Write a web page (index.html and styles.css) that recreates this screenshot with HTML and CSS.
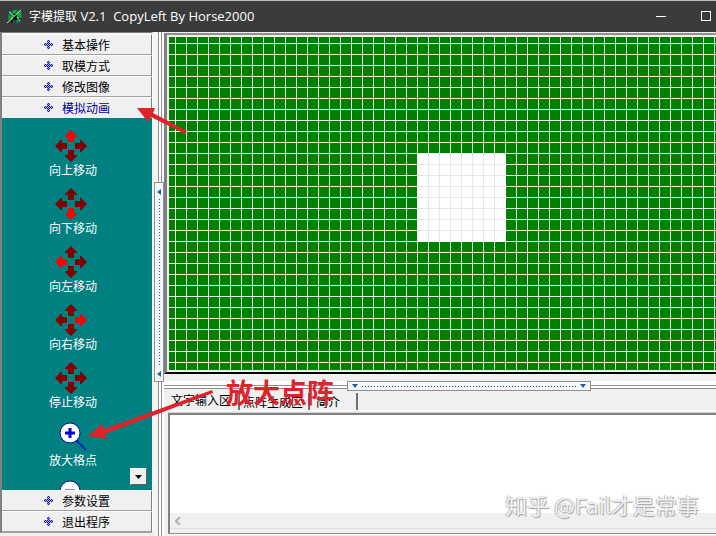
FILE: index.html
```html
<!DOCTYPE html>
<html lang="zh-CN">
<head>
  <meta charset="UTF-8">
  <meta name="viewport" content="width=device-width, initial-scale=1.0">
  <title>字模提取 V2.1</title>
  <link rel="stylesheet" href="styles.css">
</head>
<body>
  <!-- Shared shapes -->
  <svg class="defs" width="0" height="0" aria-hidden="true">
    <defs>
      <path id="arm" d="M16 0 L22 6 V7 H19 V12 H13 V7 H10 V6 Z"/>
      <g id="diamond" fill="#1c1ca8">
        <path d="M4 0h1v1h-1zM3 1h1v1h-1zM5 1h1v1h-1zM4 2h1v1h-1zM1 3h1v1h-1zM3 3h1v1h-1zM5 3h1v1h-1zM7 3h1v1h-1zM0 4h1v1h-1zM2 4h1v1h-1zM4 4h1v1h-1zM6 4h1v1h-1zM8 4h1v1h-1zM1 5h1v1h-1zM3 5h1v1h-1zM5 5h1v1h-1zM7 5h1v1h-1zM4 6h1v1h-1zM3 7h1v1h-1zM5 7h1v1h-1zM4 8h1v1h-1z"/>
        <path d="M3 0h3v3h3v3H6v3H3V6H0V3h3z" opacity=".3"/>
      </g>
      <g id="zoom">
        <path d="M21 20 L31 30" stroke="#0020c0" stroke-width="2"/>
        <circle cx="15" cy="13" r="10" fill="#fff" stroke="#10108c"/>
        <path d="M10 13h10M15 8v10" stroke="#0000d8" stroke-width="3"/>
      </g>
    </defs>
  </svg>

  <header class="title-bar">
    <svg class="app-icon" width="16" height="16" viewBox="0 0 16 16">
      <path d="M2 2h5v2h2V1h4v2h2v6h-2v5H9v-3H7v3H4v-3H1V5h1z" fill="#08766a"/>
      <path d="M6 1h3v3H6zM10 3h4v6h-4zM2 7h4v3H2z" fill="#10a040"/>
      <path d="M6 5h4v6H6zM4 11h2v3H4zM11 9h2v2h-2z" fill="#061a14"/>
      <path d="M0 14L14 1M2 3l5 4M10 8l3 4" stroke="#e6e060" fill="none"/>
    </svg>
    <h1 class="title-text"><span>字模提取</span> V2.1&nbsp; CopyLeft By Horse2000</h1>
    <button class="win-button" aria-label="最小化"><svg width="11" height="11"><path d="M0 5.500h10" stroke="#fff"/></svg></button>
    <button class="win-button" aria-label="最大化"><svg width="11" height="11"><rect x=".5" y=".5" width="9" height="9" fill="none" stroke="#fff"/></svg></button>
  </header>

  <div class="workspace">
    <nav class="sidebar">
      <button class="group"><svg width="9" height="9"><use href="#diamond"/></svg>基本操作</button>
      <button class="group"><svg width="9" height="9"><use href="#diamond"/></svg>取模方式</button>
      <button class="group"><svg width="9" height="9"><use href="#diamond"/></svg>修改图像</button>
      <button class="group active"><svg width="9" height="9"><use href="#diamond"/></svg>模拟动画</button>

      <div class="tool-panel">
        <div class="tools">
          <button class="tool">
            <svg width="32" height="32" viewBox="0 0 32 32"><use href="#arm" class="on"/><use href="#arm" transform="rotate(90 16 16)"/><use href="#arm" transform="rotate(180 16 16)"/><use href="#arm" transform="rotate(270 16 16)"/></svg>
            <span>向上移动</span>
          </button>
          <button class="tool">
            <svg width="32" height="32" viewBox="0 0 32 32"><use href="#arm"/><use href="#arm" transform="rotate(90 16 16)"/><use href="#arm" class="on" transform="rotate(180 16 16)"/><use href="#arm" transform="rotate(270 16 16)"/></svg>
            <span>向下移动</span>
          </button>
          <button class="tool">
            <svg width="32" height="32" viewBox="0 0 32 32"><use href="#arm"/><use href="#arm" transform="rotate(90 16 16)"/><use href="#arm" transform="rotate(180 16 16)"/><use href="#arm" class="on" transform="rotate(270 16 16)"/></svg>
            <span>向左移动</span>
          </button>
          <button class="tool">
            <svg width="32" height="32" viewBox="0 0 32 32"><use href="#arm"/><use href="#arm" class="on" transform="rotate(90 16 16)"/><use href="#arm" transform="rotate(180 16 16)"/><use href="#arm" transform="rotate(270 16 16)"/></svg>
            <span>向右移动</span>
          </button>
          <button class="tool">
            <svg width="32" height="32" viewBox="0 0 32 32"><use href="#arm"/><use href="#arm" transform="rotate(90 16 16)"/><use href="#arm" transform="rotate(180 16 16)"/><use href="#arm" transform="rotate(270 16 16)"/></svg>
            <span>停止移动</span>
          </button>
          <button class="tool">
            <svg width="32" height="32" viewBox="0 0 32 32"><use href="#zoom"/></svg>
            <span>放大格点</span>
          </button>
          <button class="tool" aria-label="缩小格点">
            <svg width="32" height="32" viewBox="0 0 32 32"><circle cx="15" cy="13" r="10" fill="#fff" stroke="#10108c"/><path d="M10 13h10" stroke="#0000d8" stroke-width="3"/></svg>
          </button>
        </div>
        <button class="scroll-down" aria-label="向下滚动"><svg width="7" height="4"><path d="M0 0h7L3.500 4z"/></svg></button>
      </div>

      <button class="group"><svg width="9" height="9"><use href="#diamond"/></svg>参数设置</button>
      <button class="group"><svg width="9" height="9"><use href="#diamond"/></svg>退出程序</button>
    </nav>

    <div class="v-splitter">
      <div class="v-thumb">
        <svg width="4" height="6"><path d="M4 0v6L0 3z" fill="#2060a0"/></svg>
        <i></i>
        <svg width="4" height="6"><path d="M4 0v6L0 3z" fill="#2060a0"/></svg>
      </div>
    </div>

    <main class="main">
      <div class="canvas-frame">
        <div class="dot-canvas">
          <div class="selection"></div>
        </div>
      </div>

      <div class="h-splitter">
        <div class="h-thumb">
          <svg width="6" height="4"><path d="M0 0h6L3 4z" fill="#2060a0"/></svg>
          <i></i>
          <svg width="6" height="4"><path d="M0 0h6L3 4z" fill="#2060a0"/></svg>
        </div>
      </div>

      <div class="tabs" role="tablist">
        <button class="tab selected" role="tab" aria-selected="true">文字输入区</button>
        <button class="tab" role="tab">点阵生成区</button>
        <button class="tab last" role="tab">简介</button>
      </div>

      <div class="editor">
        <textarea class="editor-text" aria-label="文字输入区"></textarea>
        <div class="h-scroll">
          <svg width="6" height="8"><path d="M5 0L1 4l4 4" fill="none" stroke="#b4b4b4" stroke-width="2"/></svg>
        </div>
      </div>
    </main>
  </div>

  <!-- Notes drawn over the window -->
  <div class="note-text">放大点阵</div>
  <svg class="note-arrows" width="230" height="450" aria-hidden="true">
    <g fill="#e0232b">
      <path d="M137 108 L155 108 L153 113 L187 131 L185 134 L151 117 L148 122 Z"/>
      <path d="M88 436 L102 424 L104 429 L212 390 L213 393 L105 434 L107 439 Z"/>
    </g>
  </svg>
  <div class="watermark">知乎 @Fail才是常事</div>
</body>
</html>
```
FILE: styles.css
```css
/* General Reset */
* {
  margin: 0;
  padding: 0;
  box-sizing: border-box;
}

body {
  position: relative;
  display: flex;
  flex-direction: column;
  height: 100vh;
  overflow: hidden;
  background: #f0f0f0;
  color: #000;
  font-family: "Noto Sans CJK SC", sans-serif;
  font-size: 12px;
  line-height: 16px;
}

button {
  border: none;
  background: none;
  color: inherit;
  font: inherit;
  white-space: nowrap;
}

svg {
  display: block;
  flex: none;
}

.defs {
  position: absolute;
}

/* Title bar */
.title-bar {
  flex: none;
  display: flex;
  align-items: center;
  height: 32px;
  padding-left: 7px;
  border-top: 1px solid #b8c0bc;
  background: #3b3b3b;
  color: #fff;
  overflow: hidden;
}

.title-text {
  flex: 1;
  margin-left: 6px;
  font-family: "Open Sans", "Noto Sans CJK SC", sans-serif;
  font-size: 13px;
  font-weight: normal;
}

.title-text span {
  font-size: 12px;
}

.win-button {
  display: flex;
  justify-content: center;
  align-items: center;
  width: 45px;
  height: 31px;
}

.win-button:last-child {
  width: 44px;
  margin-right: -12px;
}

.workspace {
  flex: 1;
  display: flex;
  min-height: 0;
}

/* Sidebar */
.sidebar {
  flex: none;
  display: flex;
  flex-direction: column;
  width: 153px;
  margin-bottom: 3px;
  border-left: 2px solid #808080;
  border-right: 1px solid #fff;
  border-top: 1px solid #808080;
  border-bottom: 1px solid #a0a0a0;
}

.group {
  flex: none;
  display: flex;
  justify-content: center;
  align-items: center;
  gap: 9px;
  height: 21px;
  padding-left: 1px;
  border-top: 1px solid #fff;
  border-right: 1px solid #808080;
  border-bottom: 1px solid #a0a0a0;
  background: #f0f0f0;
}

.group:first-child {
  margin-top: 1px;
}

.group.active {
  border-bottom-color: #f0f0f0;
  color: #0000a0;
}

.tool-panel {
  position: relative;
  flex: 1 1 0px;
  min-height: 0;
  background: #008080;
  overflow: hidden;
}

.tools {
  display: flex;
  flex-direction: column;
  align-items: center;
  gap: 10px;
  padding: 12px 8px 0 0;
}

.tool {
  flex: none;
  display: flex;
  flex-direction: column;
  align-items: center;
  justify-content: flex-start;
  width: 52px;
  height: 48px;
  color: #fff;
}

.tool svg {
  margin-right: 4px;
  fill: #800000;
}

.tool .on {
  fill: #ff0000;
}

.scroll-down {
  position: absolute;
  right: 5px;
  bottom: 5px;
  display: flex;
  justify-content: center;
  align-items: center;
  width: 17px;
  height: 17px;
  border: 1px solid #fff;
  border-right-color: #606060;
  border-bottom-color: #606060;
  background: #f0f0f0;
}

/* Splitters */
.v-splitter {
  flex: none;
  display: flex;
  justify-content: flex-end;
  align-items: flex-start;
  width: 11px;
  padding-top: 150px;
  background: linear-gradient(to right, #f4f4f4 5px, #909090 5px, #909090 6px, #fff 6px, #fff 8px, #909090 8px, #909090 9px, #fff 9px);
}

.v-thumb {
  display: flex;
  flex-direction: column;
  align-items: center;
  gap: 4px;
  width: 10px;
  height: 200px;
  padding: 6px 0 4px;
  border: 1px solid #909090;
  background: #f4f8fb;
}

.v-thumb i {
  flex: 1;
  width: 1px;
  background: repeating-linear-gradient(#3050d0 0 1px, transparent 1px 3px);
}

.h-splitter {
  flex: none;
  height: 11px;
  margin-top: 7px;
  padding-left: 183px;
  background: linear-gradient(#fff 4px, #909090 4px, #909090 5px, #fff 5px, #fff 7px, #909090 7px, #909090 8px, #f0f0f0 8px);
}

.h-thumb {
  display: flex;
  align-items: center;
  gap: 4px;
  width: 244px;
  height: 10px;
  padding: 0 4px;
  border: 1px solid #909090;
  background: #f4f8fb;
}

.h-thumb i {
  flex: 1;
  height: 1px;
  background: repeating-linear-gradient(to right, #2060a0 0 1px, transparent 1px 3px);
}

/* Dot canvas */
.main {
  flex: 1;
  display: flex;
  flex-direction: column;
  min-width: 0;
}

.canvas-frame {
  flex: 1;
  display: flex;
  min-height: 0;
  margin-top: 1px;
  padding: 2px 0 2px 2px;
  border-top: 2px solid #909090;
  border-left: 3px solid #808080;
  border-bottom: 2px solid #000;
  background: #f0f0f0;
}

.dot-canvas {
  flex: 1;
  padding: 116px 0 0 248px;
  background-color: #008000;
  background-image:
    linear-gradient(to right, #e8f4e8 1px, transparent 1px),
    linear-gradient(#e8f4e8 1px, transparent 1px);
  background-size: 11px 11px;
  background-position: 6px 6px;
}

.selection {
  width: 89px;
  height: 89px;
  border: 1px solid #fff;
  background-color: #fff;
  background-image:
    linear-gradient(to right, #e8e8e8 1px, transparent 1px),
    linear-gradient(#e8e8e8 1px, transparent 1px);
  background-size: 11px 11px;
  background-position: 10px 10px;
}

/* Tabs and editor */
.tabs {
  flex: none;
  display: flex;
  align-items: flex-end;
  height: 19px;
  padding-left: 4px;
  border-bottom: 1px solid #fff;
}

.tab {
  height: 17px;
  padding: 0 5px 0 3px;
  border-right: 2px solid #707070;
}

.tab.selected {
  height: 19px;
  padding: 0 7px 2px 3px;
}

.tab.last {
  padding: 0 16px 0 6px;
}

.editor {
  flex: none;
  margin: 2px 0 3px 4px;
  border-top: 2px solid #808080;
  border-left: 2px solid #808080;
  box-shadow: 0 -1px 0 #d8d8d8, 0 1px 0 #909090;
}

.editor-text {
  display: block;
  width: 100%;
  height: 98px;
  padding: 2px 4px;
  border: none;
  outline: none;
  resize: none;
  background: #fff;
  font: inherit;
}

.h-scroll {
  display: flex;
  align-items: center;
  height: 16px;
  margin-bottom: 4px;
  padding-left: 5px;
  border-bottom: 1px solid #e0e0e0;
  background: #f0f0f0;
}

/* Notes over the window */
.note-arrows {
  position: absolute;
  top: 0;
  left: 0;
}

.note-text {
  position: absolute;
  top: 376px;
  left: 226px;
  color: #e0232b;
  font-size: 27px;
  font-weight: bold;
  line-height: 32px;
}

.watermark {
  position: absolute;
  right: 17px;
  bottom: 18px;
  color: #f0f0f0;
  font-size: 22px;
  line-height: 28px;
  text-shadow: 1px 1px 1px #a0a0a0, -1px 0 1px #b8b8b8;
}
```
